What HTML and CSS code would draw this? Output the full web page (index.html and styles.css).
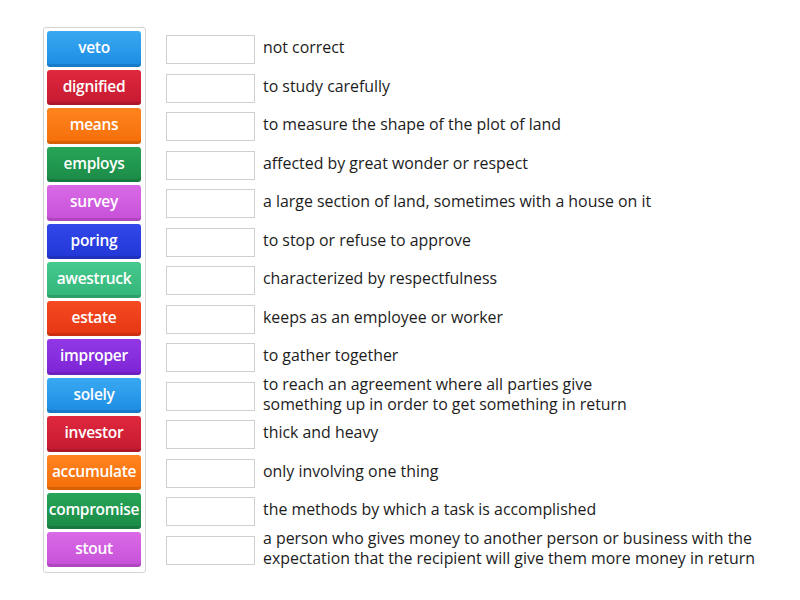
FILE: index.html
```html
<!DOCTYPE html>
<html>
<head>
<meta charset="utf-8">
<link rel="stylesheet" href="styles.css">
</head>
<body>
<div class="page">
  <div class="tiles">
    <div class="tile c-blue">veto</div>
    <div class="tile c-red">dignified</div>
    <div class="tile c-orange">means</div>
    <div class="tile c-green">employs</div>
    <div class="tile c-violet">survey</div>
    <div class="tile c-navy">poring</div>
    <div class="tile c-teal">awestruck</div>
    <div class="tile c-redorange">estate</div>
    <div class="tile c-purple">improper</div>
    <div class="tile c-blue">solely</div>
    <div class="tile c-red">investor</div>
    <div class="tile c-orange">accumulate</div>
    <div class="tile c-green">compromise</div>
    <div class="tile c-violet">stout</div>
  </div>
  <div class="rows">
    <div class="row"><div class="box"></div><div class="def">not correct</div></div>
    <div class="row"><div class="box"></div><div class="def">to study carefully</div></div>
    <div class="row"><div class="box"></div><div class="def">to measure the shape of the plot of land</div></div>
    <div class="row"><div class="box"></div><div class="def">affected by great wonder or respect</div></div>
    <div class="row"><div class="box"></div><div class="def">a large section of land, sometimes with a house on it</div></div>
    <div class="row"><div class="box"></div><div class="def">to stop or refuse to approve</div></div>
    <div class="row"><div class="box"></div><div class="def">characterized by respectfulness</div></div>
    <div class="row"><div class="box"></div><div class="def">keeps as an employee or worker</div></div>
    <div class="row"><div class="box"></div><div class="def">to gather together</div></div>
    <div class="row"><div class="box"></div><div class="def">to reach an agreement where all parties give<br>something up in order to get something in return</div></div>
    <div class="row"><div class="box"></div><div class="def">thick and heavy</div></div>
    <div class="row"><div class="box"></div><div class="def">only involving one thing</div></div>
    <div class="row"><div class="box"></div><div class="def">the methods by which a task is accomplished</div></div>
    <div class="row"><div class="box"></div><div class="def">a person who gives money to another person or business with the<br>expectation that the recipient will give them more money in return</div></div>
  </div>
</div>
</body>
</html>
```
FILE: styles.css
```css
html, body {
  margin: 0;
  padding: 0;
  background: #ffffff;
}
.page {
  display: flex;
  align-items: flex-start;
  padding: 27px 0 0 43px;
  font-family: "Open Sans", "Noto Sans", sans-serif;
}
.tiles {
  display: flex;
  flex-direction: column;
  gap: 3px;
  padding: 3px 4px 5px 3px;
  border: 1px solid #d4d4d4;
  border-radius: 3px;
}
.tile {
  width: 94px;
  height: 35.5px;
  box-sizing: border-box;
  padding-bottom: 3px;
  border-radius: 3px;
  color: #ffffff;
  font-weight: 600;
  font-size: 15.5px;
  letter-spacing: -0.3px;
  display: flex;
  align-items: center;
  justify-content: center;
  box-shadow: inset 0 -3px 0 rgba(0,0,0,0.12);
}
.c-blue { background: linear-gradient(#3aa9f2, #1b8be2); }
.c-red { background: linear-gradient(#e0283e, #c41a30); }
.c-orange { background: linear-gradient(#ff8420, #f56e08); }
.c-green { background: linear-gradient(#27a557, #1b8a47); }
.c-violet { background: linear-gradient(#da6ae6, #c650d8); }
.c-navy { background: linear-gradient(#3348ea, #2236d6); }
.c-teal { background: linear-gradient(#46c98e, #33b579); }
.c-redorange { background: linear-gradient(#f54a22, #e63512); }
.c-purple { background: linear-gradient(#9137e6, #7d25d6); }
.rows {
  display: flex;
  flex-direction: column;
  padding-top: 4px;
  margin-left: 20px;
}
.row {
  height: 38.5px;
  display: flex;
  align-items: center;
}
.box {
  width: 89px;
  height: 29px;
  box-sizing: border-box;
  border: 1px solid #cfcfcf;
  background: #ffffff;
  flex: none;
  margin-top: -1px;
}
.def {
  margin-left: 8px;
  padding-bottom: 6px;
  font-size: 15.9px;
  line-height: 20px;
  color: #1c1c1c;
  white-space: nowrap;
}
```
